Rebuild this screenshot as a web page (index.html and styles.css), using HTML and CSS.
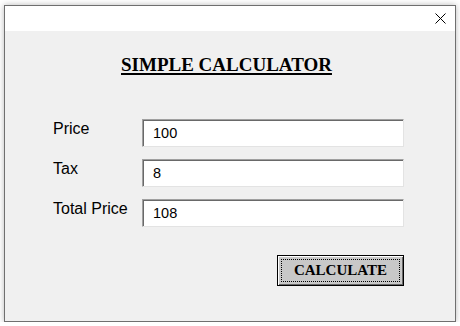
FILE: index.html
```html
<!DOCTYPE html>
<html>
<head>
<meta charset="utf-8">
<link rel="stylesheet" href="styles.css">
</head>
<body>
<div class="window">
  <div class="titlebar">
    <span class="close">
      <svg width="11" height="11" viewBox="0 0 11 11"><path d="M0.5 0.5 L10.5 10.5 M10.5 0.5 L0.5 10.5" stroke="#000" stroke-width="1" fill="none"/></svg>
    </span>
  </div>
  <div class="content">
    <h1 class="heading">SIMPLE CALCULATOR</h1>
    <div class="form">
      <div class="row"><label class="label">Price</label><div class="field">100</div></div>
      <div class="row"><label class="label">Tax</label><div class="field">8</div></div>
      <div class="row"><label class="label">Total Price</label><div class="field">108</div></div>
    </div>
    <div class="actions">
      <button class="btn"><span class="btn-focus">CALCULATE</span></button>
    </div>
  </div>
</div>
</body>
</html>
```

FILE: styles.css
```css
html, body {
  margin: 0;
  padding: 0;
  background: #ffffff;
}
body {
  padding: 5px 0 0 4px;
}
.window {
  box-sizing: border-box;
  width: 452px;
  height: 317px;
  border: 1px solid #6f6f6f;
  background: #f0f0f0;
  box-shadow: 0 0 6px rgba(0,0,0,0.28);
  display: flex;
  flex-direction: column;
}
.titlebar {
  height: 25px;
  background: #ffffff;
  display: flex;
  justify-content: flex-end;
  align-items: flex-start;
}
.close {
  display: block;
  width: 11px;
  height: 11px;
  margin: 7px 9px 0 0;
}
.close svg { display: block; }
.content {
  padding: 23px 0 0 48px;
  display: flex;
  flex-direction: column;
}
.heading {
  margin: 0 0 0 68px;
  font-family: "Liberation Serif", serif;
  font-weight: bold;
  font-size: 19px;
  line-height: 22px;
  color: #000;
  text-decoration: underline;
  text-decoration-thickness: 2px;
  text-underline-offset: 2px;
}
.form {
  margin-top: 43px;
  display: flex;
  flex-direction: column;
  gap: 12px;
}
.row {
  display: flex;
  align-items: flex-start;
}
.label {
  width: 89px;
  padding-top: 0;
  font-family: "Liberation Sans", Arial, sans-serif;
  font-size: 16px;
  line-height: 19px;
  color: #000;
}
.field {
  box-sizing: border-box;
  width: 262px;
  height: 28px;
  border: 1px solid;
  border-color: #a0a0a0 #e3e3e3 #e3e3e3 #a0a0a0;
  box-shadow: inset 1px 1px 0 #696969;
  background: #ffffff;
  padding: 0 0 0 10px;
  font-family: "Liberation Sans", Arial, sans-serif;
  font-size: 14.5px;
  line-height: 26px;
  color: #000;
}
.actions {
  margin-top: 28px;
  width: 351px;
  display: flex;
  justify-content: flex-end;
}
.btn {
  box-sizing: border-box;
  width: 127px;
  height: 31px;
  margin: 0;
  padding: 3px;
  border: 1px solid #000;
  background: #c8c8c8;
  box-shadow: inset 1px 1px 0 #ffffff, inset -1px -1px 0 #696969;
  display: flex;
}
.btn-focus {
  flex: 1;
  border: 1px dotted #000;
  font-family: "Liberation Serif", serif;
  font-weight: bold;
  font-size: 15px;
  line-height: 21px;
  color: #000;
  text-align: center;
}
```
